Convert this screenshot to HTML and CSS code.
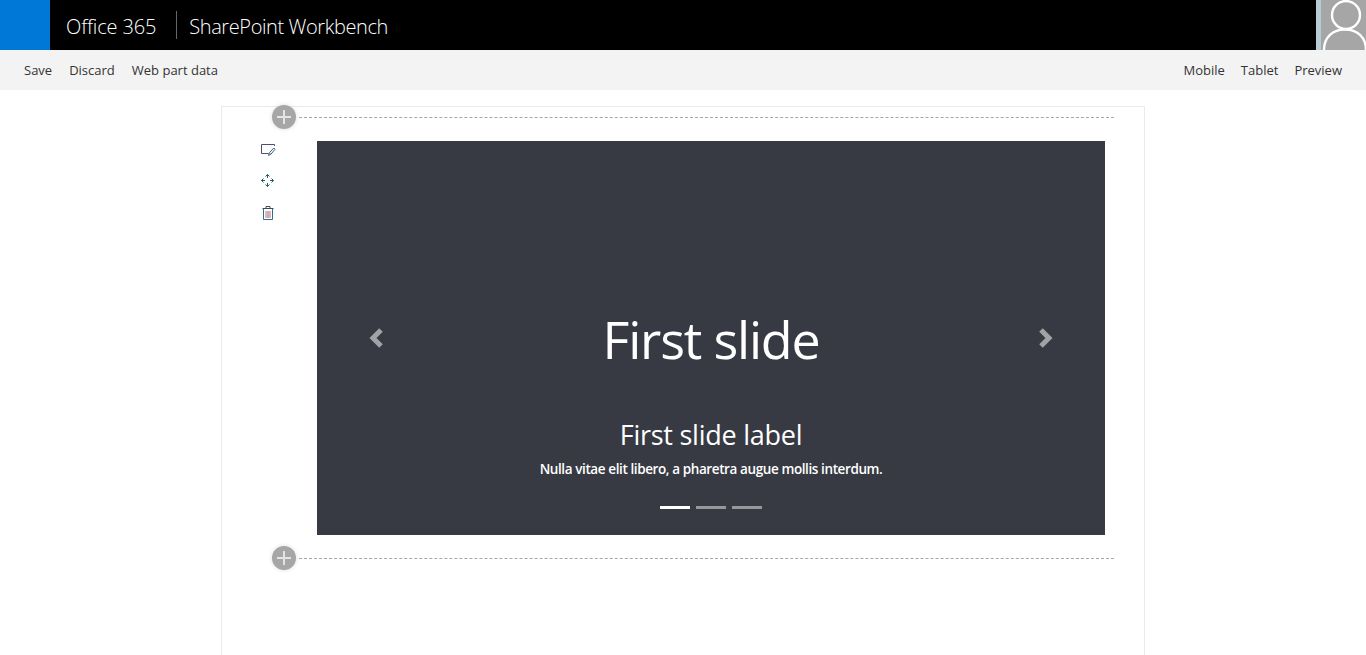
FILE: index.html
```html
<!DOCTYPE html>
<html lang="en">
<head>
<meta charset="utf-8">
<title>SharePoint Workbench</title>
<link rel="stylesheet" href="styles.css">
</head>
<body>
<header class="suite-bar">
  <div class="waffle"></div>
  <div class="brand">Office 365</div>
  <div class="divider"></div>
  <div class="app">SharePoint Workbench</div>
  <div class="avatar">
    <svg width="45" height="50" viewBox="0 0 45 50"><rect width="45" height="50" fill="#a6a6a6"/><circle cx="25" cy="15" r="14" fill="none" stroke="#fff" stroke-width="2.4"/><path d="M3 50C3 37 12 29.500 24 29.500S45 37 45 50" fill="none" stroke="#fff" stroke-width="2.400"/></svg>
  </div>
</header>
<nav class="toolbar">
  <div class="tool-group tool-group-left">
    <span class="tool">Save</span><span class="tool">Discard</span><span class="tool">Web part data</span>
  </div>
  <div class="tool-group">
    <span class="tool">Mobile</span><span class="tool">Tablet</span><span class="tool">Preview</span>
  </div>
</nav>
<main class="canvas">
  <div class="hint hint-top">
    <span class="plus"></span><span class="dash"></span>
  </div>
  <section class="zone">
    <div class="actions">
      <svg class="icon" width="16" height="16" viewBox="0 0 16 16" fill="none"><path d="M8.500 12.500H1.500V3.500H14.500V5" stroke="#4f4d70"/><path d="M8.500 14.500L9.300 11.800L13.800 7L15 8.300L10.800 13.300Z" stroke="#2f5f88"/><path d="M9.300 11.800L10.800 13.300" stroke="#c47b38"/></svg>
      <svg class="icon" width="16" height="16" viewBox="0 0 16 16" fill="none" stroke="#1f5f5f"><path d="M7.500 1.500V5M7.500 10V13.500M1.500 7.500H5M10 7.500H13.500"/><path d="M5.500 3.500L7.500 1.500L9.500 3.500M5.500 11.500L7.500 13.500L9.500 11.500M3.500 5.500L1.500 7.500L3.500 9.500M11.500 5.500L13.500 7.500L11.500 9.500"/></svg>
      <svg class="icon" width="16" height="16" viewBox="0 0 16 16" fill="none"><path d="M3.500 4V14.500H12.500V4" stroke="#2f6f8c"/><path d="M2.500 3.500H13.500M6 3V1.500H10V3" stroke="#3d4d60"/><path d="M6 6V13" stroke="#c08040"/><path d="M8 6V13" stroke="#7b5ca8"/><path d="M10 6V13" stroke="#c06a60"/></svg>
    </div>
    <div class="carousel">
      <svg class="chevron" width="16" height="20" viewBox="0 0 16 20"><path d="M14 2L6 10L14 18" fill="none" stroke="#a2a3a6" stroke-width="5"/></svg>
      <div class="slide-center">
        <div class="slide-title">First slide</div>
        <div class="caption">
          <h3 class="caption-title">First slide label</h3>
          <p class="caption-text">Nulla vitae elit libero, a pharetra augue mollis interdum.</p>
        </div>
        <div class="indicators"><span class="bar bar-active"></span><span class="bar"></span><span class="bar"></span></div>
      </div>
      <svg class="chevron" width="16" height="20" viewBox="0 0 16 20"><path d="M2 2L10 10L2 18" fill="none" stroke="#a2a3a6" stroke-width="5"/></svg>
    </div>
  </section>
  <div class="hint hint-bottom">
    <span class="plus"></span><span class="dash"></span>
  </div>
</main>
</body>
</html>
```
FILE: styles.css
```css
html, body {
  margin: 0;
  height: 655px;
  overflow: hidden;
  background: #fff;
  font-family: "Open Sans", "Noto Sans", "Liberation Sans", sans-serif;
}
.suite-bar {
  display: flex;
  align-items: center;
  height: 50px;
  background: #000;
  color: #fff;
}
.waffle {
  width: 50px;
  height: 50px;
  background: #0078d7;
}
.brand {
  margin: 2px 0 0 16px;
  font-size: 20px;
  font-weight: 300;
  letter-spacing: -0.15px;
}
.divider {
  width: 1px;
  height: 28px;
  margin: 0 12px 0 20px;
  background: #666;
}
.app {
  margin-top: 2px;
  font-size: 20px;
  font-weight: 300;
  letter-spacing: -0.4px;
}
.avatar {
  display: flex;
  margin-left: auto;
  border-left: 5px solid #b8ccd8;
  height: 50px;
}
.toolbar {
  display: flex;
  justify-content: space-between;
  align-items: center;
  height: 40px;
  padding: 0 24px;
  background: #f3f3f3;
  color: #333;
  font-size: 13px;
}
.tool-group {
  display: flex;
  gap: 16px;
}
.tool-group-left {
  gap: 17px;
}
.canvas {
  box-sizing: border-box;
  width: 924px;
  height: 549px;
  margin: 16px auto 0;
  border: 1px solid #eaeaea;
  border-bottom: 0;
}
.hint {
  display: flex;
  align-items: center;
  height: 24px;
  margin-left: 50px;
  margin-right: 30px;
}
.hint-top {
  margin-top: -2px;
}
.hint-bottom {
  margin-top: 11px;
}
.plus {
  position: relative;
  flex: none;
  width: 24px;
  height: 24px;
  border-radius: 50%;
  background: #a6a6a6;
  box-shadow: 0 0 4px rgba(0, 0, 0, 0.15);
}
.plus::before, .plus::after {
  content: "";
  position: absolute;
  background: #e4e4e4;
}
.plus::before {
  left: 5px;
  right: 5px;
  top: 11px;
  height: 2px;
}
.plus::after {
  top: 5px;
  bottom: 5px;
  left: 11px;
  width: 2px;
}
.dash {
  flex: 1;
  margin-left: 3px;
  border-top: 1px dashed #a6a6a6;
}
.zone {
  display: flex;
  margin-top: 12px;
  margin-left: 38px;
}
.actions {
  display: flex;
  flex-direction: column;
  gap: 16px;
  width: 57px;
}
.icon {
  display: block;
}
.carousel {
  display: flex;
  align-items: flex-start;
  justify-content: space-between;
  box-sizing: border-box;
  width: 788px;
  height: 394px;
  padding: 0 50px;
  background: #373a43;
  color: #fff;
}
.chevron {
  flex: none;
  margin-top: 187px;
}
.slide-center {
  display: flex;
  flex-direction: column;
  align-items: center;
  flex: 1;
  text-align: center;
}
.slide-title {
  margin-top: 162px;
  font-size: 52px;
  line-height: 72px;
  letter-spacing: -1.2px;
}
.caption {
  margin-top: 42px;
}
.caption-title {
  margin: 0;
  font-size: 27px;
  font-weight: 400;
  line-height: 36px;
  letter-spacing: -0.25px;
}
.caption-text {
  margin: 6px 0 0;
  font-size: 13.500px;
  font-weight: 600;
  line-height: 20px;
  letter-spacing: -0.4px;
}
.indicators {
  display: flex;
  gap: 6px;
  margin-top: 27px;
}
.bar {
  width: 30px;
  height: 3px;
  background: #96979b;
}
.bar-active {
  background: #fff;
}
```
